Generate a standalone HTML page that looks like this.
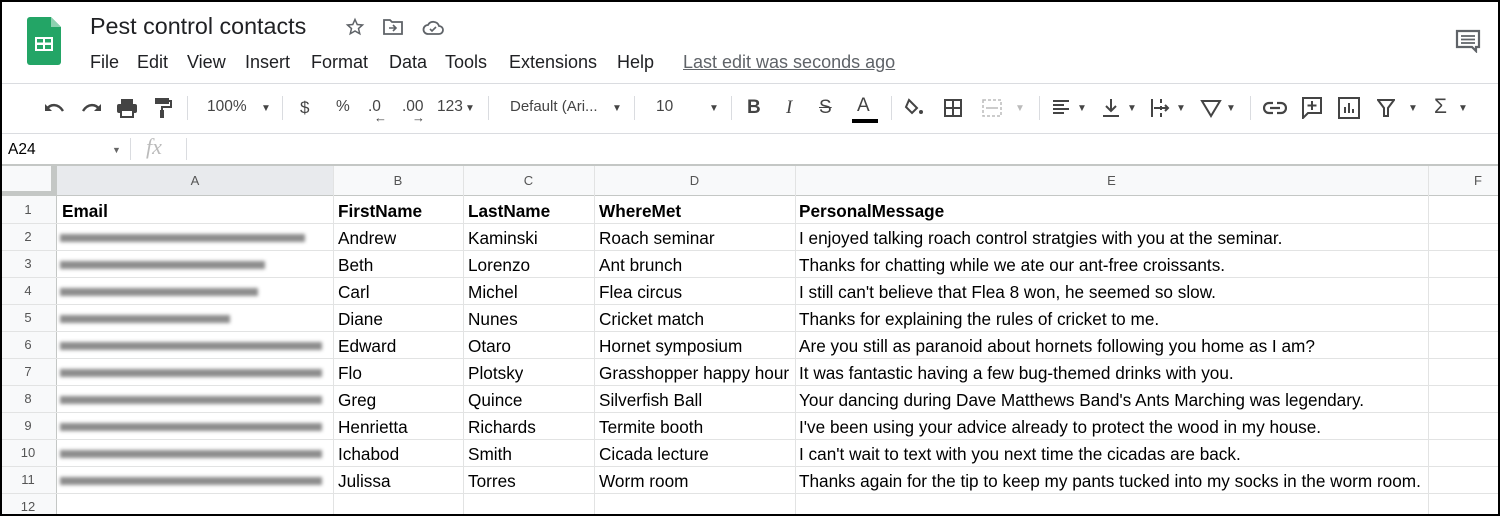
<!DOCTYPE html>
<html><head><meta charset="utf-8"><style>
*{margin:0;padding:0;box-sizing:border-box}
body{width:1500px;height:516px;overflow:hidden;background:#fff;font-family:"Liberation Sans",Arial,sans-serif;position:relative}
.a{position:absolute}
.frame{position:absolute;left:0;top:0;width:1500px;height:516px;border:2px solid #000;z-index:10;pointer-events:none}
.tb{position:absolute;top:98px;font-size:15.5px;color:#444}
.sep{position:absolute;top:96px;width:1px;height:24px;background:#dadce0}
.cell{position:absolute;font-size:17.2px;color:#000;white-space:nowrap;overflow:hidden}
.hl{position:absolute;left:0;width:1500px;height:1px;background:#e2e3e3}
.vl{position:absolute;top:166px;height:350px;width:1px;background:#e2e3e3}
.rh{position:absolute;left:0;width:56px;text-align:center;font-size:13px;color:#555}
.ch{position:absolute;top:166px;height:30px;line-height:30px;text-align:center;font-size:13px;color:#555}
.blur{position:absolute;left:60px;height:8px;background:#666;filter:blur(1.8px);opacity:.75}
</style></head><body>
<div class="frame"></div>
<svg class="a" style="left:27px;top:17px" width="34" height="48" viewBox="0 0 34 48"><path d="M3 0h21l10 10v35a3 3 0 0 1-3 3H3a3 3 0 0 1-3-3V3a3 3 0 0 1 3-3z" fill="#23a566"/><path d="M24 0v10h10z" fill="#8ed1b1"/><rect x="8" y="20" width="18" height="14" fill="#fff"/><rect x="10" y="22" width="6" height="3.5" fill="#23a566"/><rect x="18" y="22" width="6" height="3.5" fill="#23a566"/><rect x="10" y="28" width="6" height="4" fill="#23a566"/><rect x="18" y="28" width="6" height="4" fill="#23a566"/></svg>
<div class="a" style="left:90px;top:13px;font-size:23.3px;color:#202124">Pest control contacts</div>
<svg class="a" style="left:345px;top:17px" width="20" height="20" viewBox="0 0 24 24"><path d="M12 3l2.7 6 6.3.6-4.8 4.2 1.5 6.3L12 16.8 6.3 20.1l1.5-6.3L3 9.6 9.3 9z" fill="none" stroke="#5f6368" stroke-width="1.8"/></svg>
<svg class="a" style="left:383px;top:18px" width="20" height="18" viewBox="0 0 20 18"><path d="M1 2h6l2 2h10v12H1z" fill="none" stroke="#5f6368" stroke-width="1.8"/><path d="M6 10h7M10 7l3 3-3 3" fill="none" stroke="#5f6368" stroke-width="1.6"/></svg>
<svg class="a" style="left:422px;top:19px" width="22" height="16" viewBox="0 0 22 16"><path d="M6 15h11a4 4 0 0 0 0-8 6 6 0 0 0-11-1 4.5 4.5 0 0 0 0 9z" fill="none" stroke="#5f6368" stroke-width="1.8"/><path d="M8 10l2 2 4-4" fill="none" stroke="#5f6368" stroke-width="1.6"/></svg>
<div class="a" style="top:52px;font-size:18px;color:#202124">
<span class="a" style="left:90px">File</span><span class="a" style="left:137px">Edit</span><span class="a" style="left:187px">View</span><span class="a" style="left:245px">Insert</span><span class="a" style="left:311px">Format</span><span class="a" style="left:389px">Data</span><span class="a" style="left:445px">Tools</span><span class="a" style="left:509px;white-space:nowrap">Extensions</span><span class="a" style="left:617px">Help</span><span class="a" style="left:683px;color:#5f6368;text-decoration:underline;white-space:nowrap">Last edit was seconds ago</span></div>
<svg class="a" style="left:1455px;top:29px" width="26" height="24" viewBox="0 0 26 24"><path d="M2 2h22v16h-3v4l-4-4H2z" fill="none" stroke="#5f6368" stroke-width="2.2"/><path d="M6 7h14M6 10.5h14M6 14h14" stroke="#5f6368" stroke-width="1.8"/></svg>
<div class="a" style="left:0;top:83px;width:1500px;height:1px;background:#dadce0"></div>
<div class="a" style="left:0;top:133px;width:1500px;height:1px;background:#dadce0"></div>
<svg class="a" style="left:44px;top:100px" width="22" height="16" viewBox="0 0 22 16"><path d="M3 9c3-5 11-6 16 2" fill="none" stroke="#444" stroke-width="2.4"/><path d="M1 4v7h7z" fill="#444"/></svg>
<svg class="a" style="left:80px;top:100px" width="22" height="16" viewBox="0 0 22 16"><path d="M19 9c-3-5-11-6-16 2" fill="none" stroke="#444" stroke-width="2.4"/><path d="M21 4v7h-7z" fill="#444"/></svg>
<svg class="a" style="left:116px;top:98px" width="22" height="20" viewBox="0 0 22 20"><rect x="5" y="1" width="12" height="5" fill="#444"/><rect x="1" y="6" width="20" height="9" rx="2" fill="#444"/><rect x="5" y="12" width="12" height="7" fill="#fff" stroke="#444" stroke-width="2"/></svg>
<svg class="a" style="left:154px;top:97px" width="18" height="22" viewBox="0 0 18 22"><rect x="1" y="1" width="14" height="6" fill="#444"/><path d="M15 4h2v6H8v4" fill="none" stroke="#444" stroke-width="2"/><rect x="6" y="13" width="4" height="8" fill="#444"/></svg>
<div class="sep" style="left:187px"></div>
<div class="tb" style="left:207px">100%</div><div class="tb" style="left:261px;font-size:10px;top:103px">▼</div>
<div class="sep" style="left:282px"></div>
<div class="tb" style="left:300px;font-size:17px">$</div><div class="tb" style="left:336px">%</div>
<div class="tb" style="left:368px">.0</div><div class="tb" style="left:374px;top:110px;font-size:13px">←</div>
<div class="tb" style="left:402px">.00</div><div class="tb" style="left:412px;top:110px;font-size:13px">→</div>
<div class="tb" style="left:437px">123</div><div class="tb" style="left:465px;font-size:10px;top:103px">▼</div>
<div class="sep" style="left:488px"></div>
<div class="tb" style="left:510px;font-size:15px">Default (Ari...</div><div class="tb" style="left:612px;font-size:10px;top:103px">▼</div>
<div class="sep" style="left:634px"></div>
<div class="tb" style="left:656px">10</div><div class="tb" style="left:709px;font-size:10px;top:103px">▼</div>
<div class="sep" style="left:731px"></div>
<div class="tb" style="left:747px;font-weight:bold;font-size:19px;top:97px">B</div>
<div class="tb" style="left:786px;font-style:italic;font-size:19px;top:97px;font-family:'Liberation Serif'">I</div>
<div class="tb" style="left:819px;font-size:19px;top:97px;text-decoration:line-through">S</div>
<div class="tb" style="left:857px;font-size:19px;top:95px">A</div><div class="a" style="left:852px;top:119px;width:26px;height:4px;background:#000"></div>
<div class="sep" style="left:891px"></div>
<svg class="a" style="left:904px;top:98px" width="22" height="20" viewBox="0 0 22 20"><path d="M5 2l8 8-5 5-6-6z" fill="none" stroke="#444" stroke-width="2"/><circle cx="17" cy="14" r="2" fill="#444"/></svg>
<svg class="a" style="left:944px;top:99px" width="18" height="18" viewBox="0 0 18 18"><path d="M1 1h16v16H1zM9 1v16M1 9h16" fill="none" stroke="#444" stroke-width="2"/></svg>
<svg class="a" style="left:982px;top:99px" width="20" height="18" viewBox="0 0 20 18"><path d="M1 1h18v16H1z" fill="none" stroke="#bbb" stroke-width="1.5" stroke-dasharray="3 2"/><path d="M4 9h12" stroke="#bbb" stroke-width="1.5"/></svg>
<div class="tb" style="left:1015px;font-size:10px;top:103px;color:#bbb">▼</div>
<div class="sep" style="left:1039px"></div>
<svg class="a" style="left:1052px;top:99px" width="18" height="16" viewBox="0 0 18 16"><path d="M1 2h16M1 6h11M1 10h16M1 14h11" stroke="#444" stroke-width="2"/></svg><div class="tb" style="left:1077px;font-size:10px;top:103px">▼</div>
<svg class="a" style="left:1102px;top:98px" width="18" height="20" viewBox="0 0 18 20"><path d="M9 1v12M4 8l5 5 5-5M1 18h16" fill="none" stroke="#444" stroke-width="2"/></svg><div class="tb" style="left:1127px;font-size:10px;top:103px">▼</div>
<svg class="a" style="left:1150px;top:98px" width="22" height="20" viewBox="0 0 22 20"><path d="M2 1v18M11 1v4M11 8v4M11 15v4M4 10h14M15 7l3 3-3 3" fill="none" stroke="#444" stroke-width="2"/></svg><div class="tb" style="left:1176px;font-size:10px;top:103px">▼</div>
<svg class="a" style="left:1200px;top:98px" width="22" height="20" viewBox="0 0 22 20"><path d="M2 3h18l-9 15z" fill="none" stroke="#444" stroke-width="2"/></svg><div class="tb" style="left:1226px;font-size:10px;top:103px">▼</div>
<div class="sep" style="left:1250px"></div>
<svg class="a" style="left:1263px;top:101px" width="24" height="14" viewBox="0 0 24 14"><path d="M10 2H6a5 5 0 0 0 0 10h4M14 2h4a5 5 0 0 1 0 10h-4M7 7h10" fill="none" stroke="#444" stroke-width="2.2"/></svg>
<svg class="a" style="left:1302px;top:97px" width="20" height="22" viewBox="0 0 20 22"><path d="M1 1h18v15H6l-5 5z" fill="none" stroke="#444" stroke-width="2"/><path d="M10 4v9M5.5 8.5h9" stroke="#444" stroke-width="2"/></svg>
<svg class="a" style="left:1338px;top:97px" width="22" height="22" viewBox="0 0 22 22"><rect x="1" y="1" width="20" height="20" fill="none" stroke="#444" stroke-width="2"/><path d="M7 16V10M11 16V6M15 16v-4" stroke="#444" stroke-width="2"/></svg>
<svg class="a" style="left:1377px;top:99px" width="18" height="18" viewBox="0 0 18 18"><path d="M1 1h16l-6 8v8H7V9z" fill="none" stroke="#444" stroke-width="2"/></svg><div class="tb" style="left:1408px;font-size:10px;top:103px">▼</div>
<div class="tb" style="left:1434px;font-size:21px;top:95px">Σ</div><div class="tb" style="left:1458px;font-size:10px;top:103px">▼</div>
<div class="a" style="left:8px;top:141px;font-size:15.5px;color:#000">A24</div>
<div class="a" style="left:112px;top:145px;font-size:9px;color:#666">▼</div>
<div class="a" style="left:130px;top:138px;width:1px;height:22px;background:#dadce0"></div>
<div class="a" style="left:146px;top:134px;font-size:22px;color:#bbb;font-style:italic;font-family:'Liberation Serif',serif">fx</div>
<div class="a" style="left:186px;top:138px;width:1px;height:22px;background:#dadce0"></div>
<div class="a" style="left:0;top:164px;width:1500px;height:2px;background:#c4c7c5"></div>
<div class="a" style="left:0;top:166px;width:1500px;height:30px;background:#f8f9fa"></div>
<div class="a" style="left:0;top:166px;width:56px;height:350px;background:#f8f9fa"></div>
<div class="a" style="left:51px;top:166px;width:5px;height:30px;background:#c4c7c5"></div>
<div class="a" style="left:0;top:191px;width:56px;height:5px;background:#c4c7c5"></div>
<div class="a" style="left:57px;top:166px;width:276px;height:30px;background:#e8eaed"></div>
<div class="ch" style="left:57px;width:276px">A</div><div class="ch" style="left:333px;width:130px">B</div><div class="ch" style="left:463px;width:131px">C</div><div class="ch" style="left:594px;width:201px">D</div><div class="ch" style="left:795px;width:633px">E</div><div class="ch" style="left:1428px;width:100px">F</div>
<div class="a" style="left:0;top:195px;width:1500px;height:1px;background:#c4c7c5"></div>
<div class="vl" style="left:56px;background:#c4c7c5"></div>
<div class="vl" style="left:333px"></div><div class="vl" style="left:463px"></div><div class="vl" style="left:594px"></div><div class="vl" style="left:795px"></div><div class="vl" style="left:1428px"></div>
<div class="hl" style="top:223px"></div><div class="hl" style="top:250px"></div><div class="hl" style="top:277px"></div><div class="hl" style="top:304px"></div><div class="hl" style="top:331px"></div><div class="hl" style="top:358px"></div><div class="hl" style="top:385px"></div><div class="hl" style="top:412px"></div><div class="hl" style="top:439px"></div><div class="hl" style="top:466px"></div><div class="hl" style="top:493px"></div>
<div class="rh" style="top:202px">1</div><div class="rh" style="top:229px">2</div><div class="rh" style="top:256px">3</div><div class="rh" style="top:283px">4</div><div class="rh" style="top:310px">5</div><div class="rh" style="top:337px">6</div><div class="rh" style="top:364px">7</div><div class="rh" style="top:391px">8</div><div class="rh" style="top:418px">9</div><div class="rh" style="top:445px">10</div><div class="rh" style="top:472px">11</div><div class="rh" style="top:499px">12</div>
<div class="blur" style="top:234px;width:245px"></div><div class="blur" style="top:261px;width:205px"></div><div class="blur" style="top:288px;width:198px"></div><div class="blur" style="top:315px;width:170px"></div><div class="blur" style="top:342px;width:262px"></div><div class="blur" style="top:369px;width:262px"></div><div class="blur" style="top:396px;width:262px"></div><div class="blur" style="top:423px;width:262px"></div><div class="blur" style="top:450px;width:262px"></div><div class="blur" style="top:477px;width:262px"></div>
<div class="cell" style="left:62px;top:201px;font-weight:bold">Email</div><div class="cell" style="left:338px;top:201px;font-weight:bold">FirstName</div><div class="cell" style="left:468px;top:201px;font-weight:bold">LastName</div><div class="cell" style="left:599px;top:201px;font-weight:bold">WhereMet</div><div class="cell" style="left:799px;top:201px;font-weight:bold">PersonalMessage</div>
<div class="cell" style="left:338px;top:228px">Andrew</div><div class="cell" style="left:468px;top:228px">Kaminski</div><div class="cell" style="left:599px;top:228px">Roach seminar</div><div class="cell" style="left:799px;top:228px">I enjoyed talking roach control stratgies with you at the seminar.</div>
<div class="cell" style="left:338px;top:255px">Beth</div><div class="cell" style="left:468px;top:255px">Lorenzo</div><div class="cell" style="left:599px;top:255px">Ant brunch</div><div class="cell" style="left:799px;top:255px">Thanks for chatting while we ate our ant-free croissants.</div>
<div class="cell" style="left:338px;top:282px">Carl</div><div class="cell" style="left:468px;top:282px">Michel</div><div class="cell" style="left:599px;top:282px">Flea circus</div><div class="cell" style="left:799px;top:282px">I still can't believe that Flea 8 won, he seemed so slow.</div>
<div class="cell" style="left:338px;top:309px">Diane</div><div class="cell" style="left:468px;top:309px">Nunes</div><div class="cell" style="left:599px;top:309px">Cricket match</div><div class="cell" style="left:799px;top:309px">Thanks for explaining the rules of cricket to me.</div>
<div class="cell" style="left:338px;top:336px">Edward</div><div class="cell" style="left:468px;top:336px">Otaro</div><div class="cell" style="left:599px;top:336px">Hornet symposium</div><div class="cell" style="left:799px;top:336px">Are you still as paranoid about hornets following you home as I am?</div>
<div class="cell" style="left:338px;top:363px">Flo</div><div class="cell" style="left:468px;top:363px">Plotsky</div><div class="cell" style="left:599px;top:363px;width:196px">Grasshopper happy hour</div><div class="cell" style="left:799px;top:363px">It was fantastic having a few bug-themed drinks with you.</div>
<div class="cell" style="left:338px;top:390px">Greg</div><div class="cell" style="left:468px;top:390px">Quince</div><div class="cell" style="left:599px;top:390px">Silverfish Ball</div><div class="cell" style="left:799px;top:390px">Your dancing during Dave Matthews Band's Ants Marching was legendary.</div>
<div class="cell" style="left:338px;top:417px">Henrietta</div><div class="cell" style="left:468px;top:417px">Richards</div><div class="cell" style="left:599px;top:417px">Termite booth</div><div class="cell" style="left:799px;top:417px">I've been using your advice already to protect the wood in my house.</div>
<div class="cell" style="left:338px;top:444px">Ichabod</div><div class="cell" style="left:468px;top:444px">Smith</div><div class="cell" style="left:599px;top:444px">Cicada lecture</div><div class="cell" style="left:799px;top:444px">I can't wait to text with you next time the cicadas are back.</div>
<div class="cell" style="left:338px;top:471px">Julissa</div><div class="cell" style="left:468px;top:471px">Torres</div><div class="cell" style="left:599px;top:471px">Worm room</div><div class="cell" style="left:799px;top:471px;width:628px">Thanks again for the tip to keep my pants tucked into my socks in the worm room.</div>
</body></html>
